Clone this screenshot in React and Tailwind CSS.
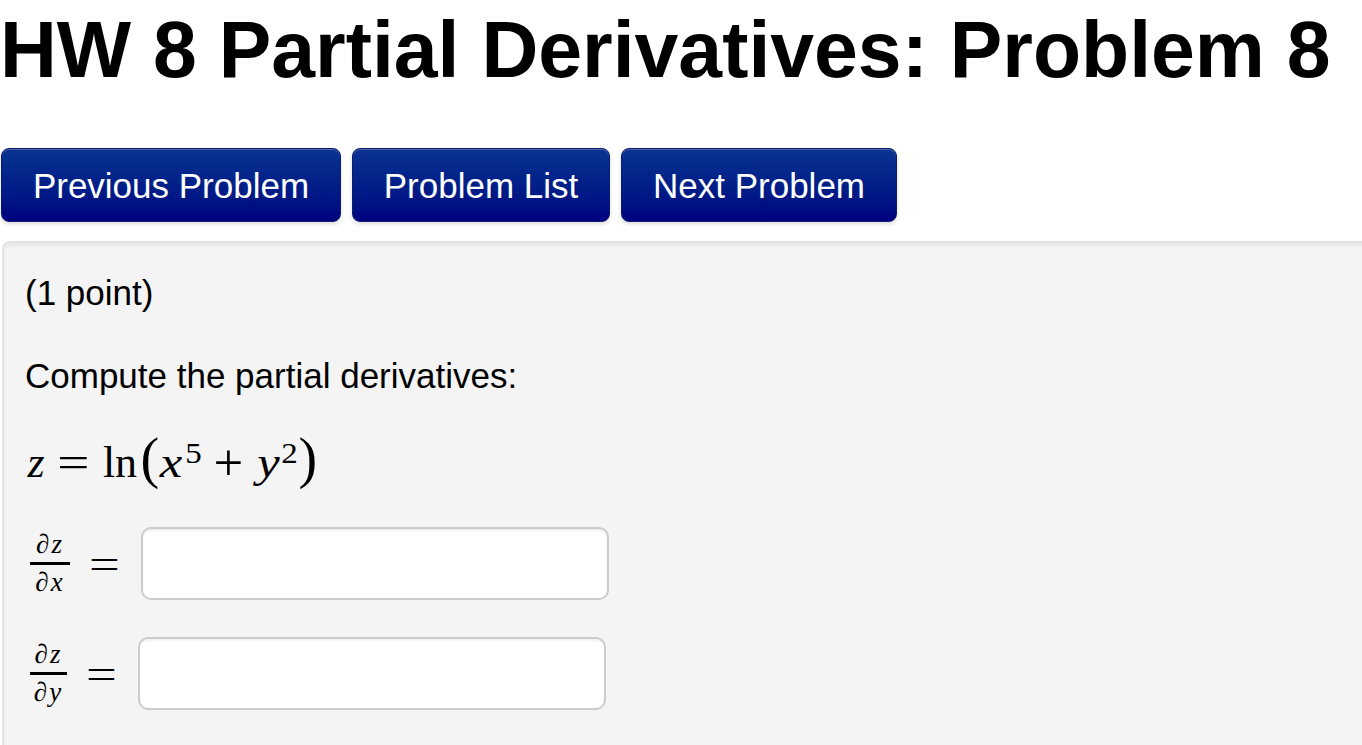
import React from 'react';

const sans = { fontFamily: '"Liberation Sans", Arial, sans-serif' };
const serif = { fontFamily: '"Liberation Serif", "DejaVu Serif", serif' };

function NavButton({ children, className = '' }) {
  return (
    <button
      className={`h-[74px] flex items-center justify-center whitespace-nowrap rounded-[8px] border border-[#0a1c6e] bg-gradient-to-b from-[#0c3291] to-[#00007f] text-white text-[35px] leading-none shadow-[inset_0_1px_0_rgba(255,255,255,0.25),0_2px_4px_rgba(0,0,0,0.15)] ${className}`}
      style={sans}
    >
      {children}
    </button>
  );
}

// one glyph of the formula, pinned to a fixed width
function G({ w, ml = '', className = '', children }) {
  return <span className={`inline-block text-center ${w} ${ml} ${className}`}>{children}</span>;
}

function Fraction({ den, lineW }) {
  return (
    <span className={`inline-flex flex-col items-center text-[27px] leading-none ${lineW}`} style={serif}>
      <span className="italic tracking-[2px] pb-[4px]">∂z</span>
      <span className="block w-full h-[3px] bg-black" />
      <span className="italic tracking-[2px] pt-[4px]">∂{den}</span>
    </span>
  );
}

function AnswerRow({ den, lineW, eqMl, inputMl, className = '' }) {
  return (
    <div className={`flex items-center h-[73px] pl-[5px] ${className}`}>
      <Fraction den={den} lineW={lineW} />
      <span className={`inline-block w-[29px] text-center text-[42px] leading-none scale-x-130 ${eqMl}`} style={serif}>=</span>
      <input
        type="text"
        className={`h-[73px] w-[468px] bg-white border-[2.5px] border-[#cccccc] rounded-[10px] shadow-[inset_0_2px_2px_rgba(0,0,0,0.06)] outline-none ${inputMl}`}
      />
    </div>
  );
}

export default function App() {
  return (
    <div className="w-[1362px] h-[745px] overflow-hidden bg-white text-black" style={sans}>
      <h1 className="text-[78.75px] font-bold leading-[100px] whitespace-nowrap">
        HW 8 Partial Derivatives: Problem 8
      </h1>

      <div className="flex mt-[48px] ml-[1px] gap-[11px]">
        <NavButton className="w-[340px]">Previous Problem</NavButton>
        <NavButton className="w-[258px]">Problem List</NavButton>
        <NavButton className="w-[276px]">Next Problem</NavButton>
      </div>

      <div className="mt-[19px] ml-[2px] w-[1420px] h-[600px] bg-[#f4f4f4] border-[2.5px] border-[#e3e3e3] rounded-[8px] shadow-[inset_0_3px_3px_rgba(0,0,0,0.05)] pt-[25px] pl-[21px]">
        <p className="text-[35px] leading-[50px]">(1 point)</p>
        <p className="text-[35px] leading-[50px] mt-[33px]">Compute the partial derivatives:</p>

        {/* z = ln(x^5 + y^2) */}
        <div className="flex items-baseline h-[60px] mt-[27px] pl-[2.5px] text-[44px] leading-[60px] whitespace-nowrap" style={serif}>
          <G w="w-[17px]" className="italic">z</G>
          <G w="w-[29px]" ml="ml-[14px]" className="scale-x-130">=</G>
          <G w="w-[35px]" ml="ml-[15px]">ln</G>
          <G w="w-[18px]" ml="ml-[3px]" className="text-[56px] font-light">(</G>
          <G w="w-[24px]" className="italic scale-x-115">x</G>
          <G w="w-[14px]" ml="ml-[3px]" className="text-[30px] scale-x-110 -translate-y-[14px]">5</G>
          <G w="w-[27px]" ml="ml-[15px]" className="scale-[1.2]">+</G>
          <G w="w-[23px]" ml="ml-[15px]" className="italic scale-x-115">y</G>
          <G w="w-[13px]" ml="ml-[2px]" className="text-[30px] scale-x-110 -translate-y-[14px]">2</G>
          <G w="w-[18px]" ml="ml-[4px]" className="text-[56px] font-light">)</G>
        </div>

        <AnswerRow den="x" lineW="w-[40px]" eqMl="ml-[20px]" inputMl="ml-[22px]" className="mt-[39px]" />
        <AnswerRow den="y" lineW="w-[37px]" eqMl="ml-[20px]" inputMl="ml-[22px]" className="mt-[37px]" />
      </div>
    </div>
  );
}
